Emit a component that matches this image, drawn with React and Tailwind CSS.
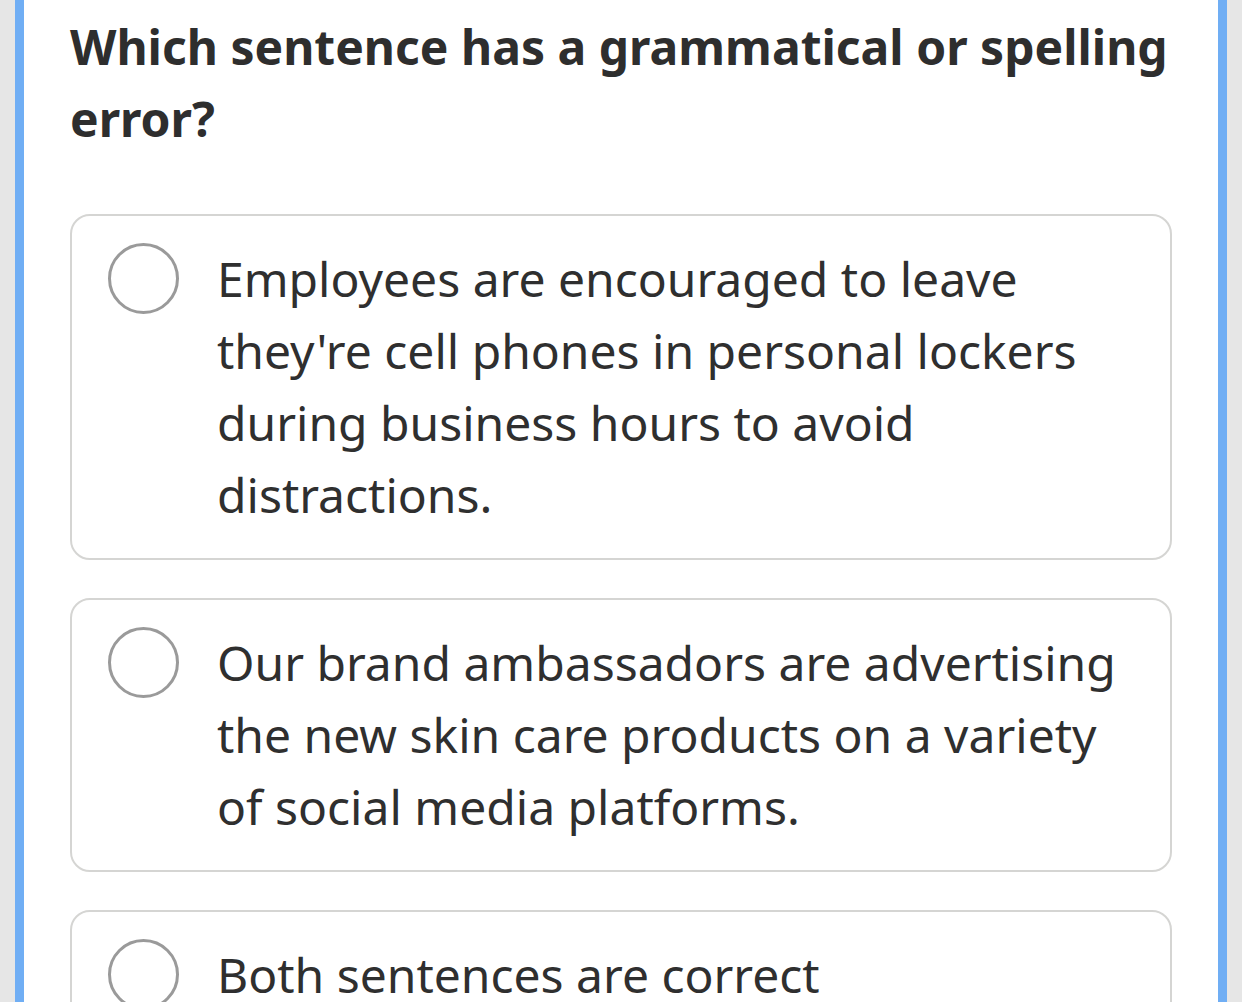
export default function App() {
  const options = [
    "Employees are encouraged to leave they're cell phones in personal lockers during business hours to avoid distractions.",
    "Our brand ambassadors are advertising the new skin care products on a variety of social media platforms.",
    "Both sentences are correct",
  ];
  return (
    <div className="flex h-[1002px] w-[1242px] overflow-hidden bg-[#e6e6e6]" style={{ fontFamily: '"Noto Sans", "Open Sans", sans-serif' }}>
      <div className="w-[15px] shrink-0" />
      <div className="w-[9px] shrink-0 bg-[#70aef4]" />
      <div className="flex-1 bg-white px-[46px] pt-[11px]">
        <h1 className="text-[48px] font-bold leading-[72px] text-[#2e2e2e]">
          Which sentence has a grammatical or spelling error?
        </h1>
        <div className="mt-[59px] flex flex-col gap-[38px]">
          {options.map((t, i) => (
            <div key={i} className="flex items-start gap-[38px] rounded-[20px] border-2 border-[#d5d5d3] pl-[36px] pr-[40px] py-[27px]">
              <div className="h-[71px] w-[71px] shrink-0 rounded-full border-[3px] border-[#9a9a9a]" />
              <div className="text-[48px] leading-[72px] text-[#2f2f2f]">{t}</div>
            </div>
          ))}
        </div>
      </div>
      <div className="w-[9px] shrink-0 bg-[#70aef4]" />
      <div className="w-[15px] shrink-0" />
    </div>
  );
}
